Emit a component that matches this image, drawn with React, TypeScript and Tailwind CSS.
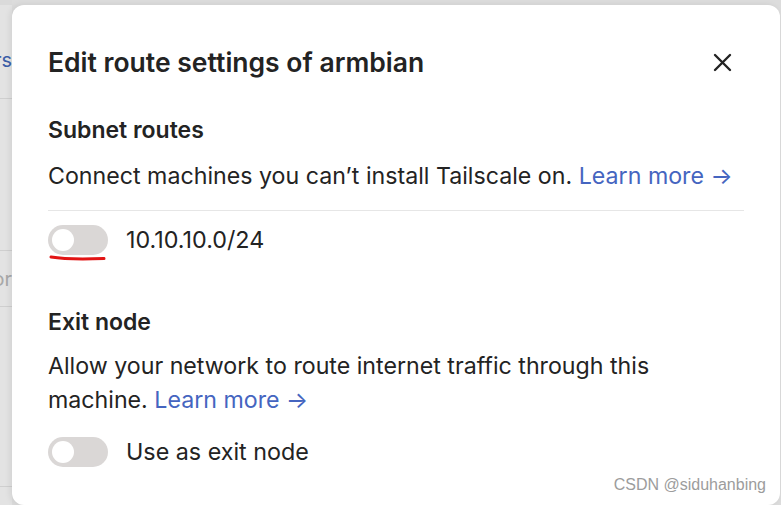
import * as React from "react";

function Toggle() {
  return (
    <span className="relative inline-flex h-[30px] w-[60px] shrink-0 items-center rounded-full bg-[#dad7d6]">
      <span className="ml-[4px] h-[22px] w-[22px] rounded-full bg-white" />
    </span>
  );
}

function LearnMore() {
  return <span className="text-[#4565c0]">Learn more →</span>;
}

export default function App() {
  return (
    <div
      className="relative h-[505px] w-[781px] overflow-hidden bg-[#dcdcdc] text-[#232323]"
      style={{ fontFamily: "Inter, 'Noto Sans', sans-serif" }}
    >
      {/* page behind the overlay */}
      <div className="flex h-full w-[12px] flex-col overflow-hidden bg-[#e3e3e3]">
        <div className="h-[5px] shrink-0 bg-[#dadada]" />
        <div className="flex h-[94px] shrink-0 items-center justify-end border-b border-[#cfcfcf] pt-[16px] text-[20px] text-[#3b5ea8]">
          <span className="whitespace-nowrap">rs</span>
        </div>
        <div className="h-[152px] shrink-0 border-b border-[#cfcfcf]" />
        <div className="flex h-[56px] shrink-0 items-center justify-end border-b border-[#cfcfcf] text-[20px] text-[#a8a8a8]">
          <span className="whitespace-nowrap">or</span>
        </div>
        <div className="h-[180px] shrink-0 border-b border-[#cfcfcf]" />
      </div>

      {/* dialog */}
      <div className="absolute left-[12px] top-[5px] flex h-[500px] w-[768px] flex-col rounded-[12px] bg-white px-[36px] pt-[41px] shadow-[-2px_0_6px_rgba(0,0,0,0.08)]">
        <div className="flex items-center justify-between">
          <h2 className="text-[26.5px] font-semibold leading-[32px] text-[#232323]">
            Edit route settings of armbian
          </h2>
          <button className="flex h-[32px] w-[44px] items-center justify-center text-[#232323]">
            <svg width="19" height="19" viewBox="0 0 19 19" fill="none">
              <path d="M2 2L17 17M17 2L2 17" stroke="currentColor" strokeWidth="2.4" strokeLinecap="round" />
            </svg>
          </button>
        </div>

        <h3 className="mt-[37px] text-[23px] font-semibold leading-[30px]">Subnet routes</h3>
        <p className="mt-[14px] text-[23.2px] leading-[34px]">
          Connect machines you can’t install Tailscale on. <LearnMore />
        </p>
        <div className="mt-[17px] border-t border-[#e6e6e6]" />
        <div className="relative mt-[14px] flex items-center gap-[18px]">
          <Toggle />
          <span className="text-[23.3px] leading-[30px]">10.10.10.0/24</span>
          <svg className="absolute left-[1px] top-[29px]" width="58" height="8" viewBox="0 0 58 8" fill="none">
            <path d="M2 3C14 5 30 5.5 55 4.5" stroke="#e21414" strokeWidth="3" strokeLinecap="round" />
          </svg>
        </div>

        <h3 className="mt-[52px] text-[23px] font-semibold leading-[30px]">Exit node</h3>
        <p className="mt-[12px] text-[23.2px] leading-[34px]">
          Allow your network to route internet traffic through this
          <br />
          machine. <LearnMore />
        </p>
        <div className="mt-[20px] flex items-center gap-[18px]">
          <Toggle />
          <span className="text-[23.3px] leading-[30px]">Use as exit node</span>
        </div>

        <div
          className="absolute bottom-[8px] right-[14px] text-[16px] text-[#9c9c9c]"
          style={{ fontFamily: "'Liberation Sans', sans-serif" }}
        >
          CSDN @siduhanbing
        </div>
      </div>
    </div>
  );
}
